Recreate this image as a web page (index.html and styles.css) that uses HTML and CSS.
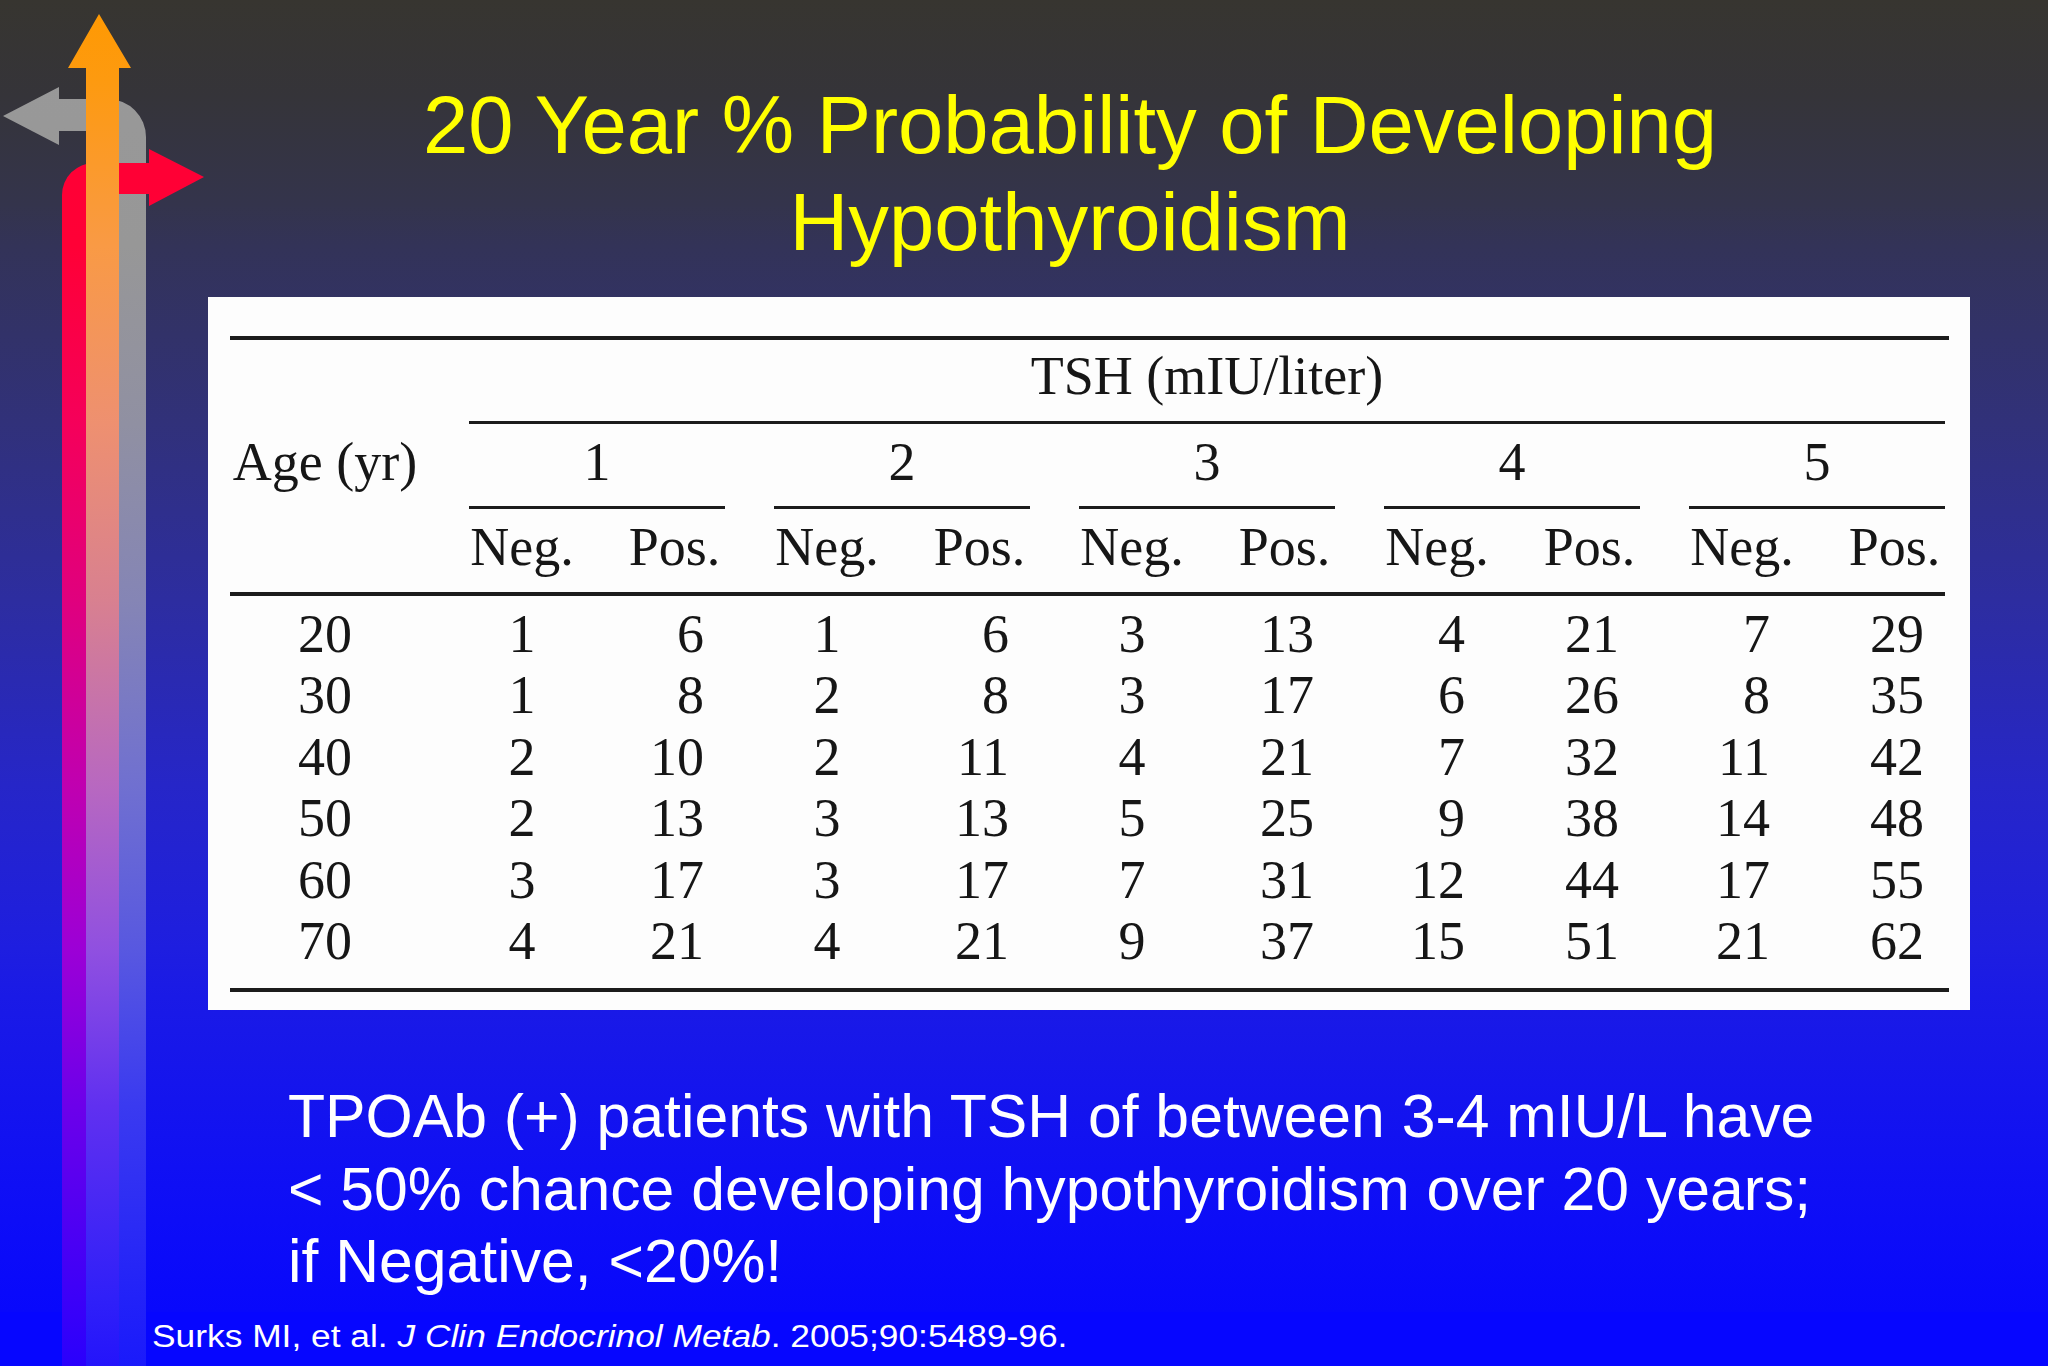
FILE: index.html
```html
<!DOCTYPE html>
<html lang="en">
<head>
<meta charset="utf-8">
<title>20 Year % Probability of Developing Hypothyroidism</title>
<link rel="stylesheet" href="styles.css">
</head>
<body>
<div class="slide">
  <h1 class="title">20 Year % Probability of Developing<br>Hypothyroidism</h1>

  <div class="table-box">
    <div class="grid">
      <div class="age-head">Age (yr)</div>
      <div class="tsh">TSH (mIU/liter)</div>

      <div class="grp">1</div>
      <div class="grp">2</div>
      <div class="grp">3</div>
      <div class="grp">4</div>
      <div class="grp">5</div>

      <div class="sub">Neg.</div><div class="sub">Pos.</div>
      <div class="sub">Neg.</div><div class="sub">Pos.</div>
      <div class="sub">Neg.</div><div class="sub">Pos.</div>
      <div class="sub">Neg.</div><div class="sub">Pos.</div>
      <div class="sub">Neg.</div><div class="sub">Pos.</div>

      <div class="midrule"></div>

      <div class="age">20</div><div class="neg">1</div><div class="pos">6</div><div class="neg">1</div><div class="pos">6</div><div class="neg">3</div><div class="pos">13</div><div class="neg2">4</div><div class="pos">21</div><div class="neg2">7</div><div class="pos">29</div>
      <div class="age">30</div><div class="neg">1</div><div class="pos">8</div><div class="neg">2</div><div class="pos">8</div><div class="neg">3</div><div class="pos">17</div><div class="neg2">6</div><div class="pos">26</div><div class="neg2">8</div><div class="pos">35</div>
      <div class="age">40</div><div class="neg">2</div><div class="pos">10</div><div class="neg">2</div><div class="pos">11</div><div class="neg">4</div><div class="pos">21</div><div class="neg2">7</div><div class="pos">32</div><div class="neg2">11</div><div class="pos">42</div>
      <div class="age">50</div><div class="neg">2</div><div class="pos">13</div><div class="neg">3</div><div class="pos">13</div><div class="neg">5</div><div class="pos">25</div><div class="neg2">9</div><div class="pos">38</div><div class="neg2">14</div><div class="pos">48</div>
      <div class="age">60</div><div class="neg">3</div><div class="pos">17</div><div class="neg">3</div><div class="pos">17</div><div class="neg">7</div><div class="pos">31</div><div class="neg2">12</div><div class="pos">44</div><div class="neg2">17</div><div class="pos">55</div>
      <div class="age">70</div><div class="neg">4</div><div class="pos">21</div><div class="neg">4</div><div class="pos">21</div><div class="neg">9</div><div class="pos">37</div><div class="neg2">15</div><div class="pos">51</div><div class="neg2">21</div><div class="pos">62</div>
    </div>
  </div>

  <p class="note">TPOAb (+) patients with TSH of between 3-4 mIU/L have<br>&lt; 50% chance developing hypothyroidism over 20 years;<br>if Negative, &lt;20%!</p>

  <div class="footer"><span class="cite">Surks MI, et al. <i>J Clin Endocrinol Metab</i>. 2005;90:5489-96.</span></div>

  <svg class="arrows" width="220" height="1366" viewBox="0 0 220 1366" aria-hidden="true">
    <defs>
      <linearGradient id="gRed" gradientUnits="userSpaceOnUse" x1="0" y1="0" x2="0" y2="1366">
        <stop offset="0" stop-color="#ff0033"/>
        <stop offset="0.18" stop-color="#ff0036"/>
        <stop offset="0.31" stop-color="#f5005a"/>
        <stop offset="0.44" stop-color="#e0007e"/>
        <stop offset="0.575" stop-color="#c000b0"/>
        <stop offset="0.695" stop-color="#9c00d6"/>
        <stop offset="0.81" stop-color="#6c00ea"/>
        <stop offset="0.95" stop-color="#3c00f8"/>
        <stop offset="1" stop-color="#2a00fc"/>
      </linearGradient>
      <linearGradient id="gOrange" gradientUnits="userSpaceOnUse" x1="0" y1="0" x2="0" y2="1366">
        <stop offset="0" stop-color="#ff9900"/>
        <stop offset="0.06" stop-color="#fd9a10"/>
        <stop offset="0.18" stop-color="#f99a45"/>
        <stop offset="0.31" stop-color="#ee9070"/>
        <stop offset="0.44" stop-color="#d88090"/>
        <stop offset="0.575" stop-color="#b868c0"/>
        <stop offset="0.695" stop-color="#9050e0"/>
        <stop offset="0.81" stop-color="#6030f0"/>
        <stop offset="0.95" stop-color="#3020f8"/>
        <stop offset="1" stop-color="#2414fb"/>
      </linearGradient>
      <linearGradient id="gGray" gradientUnits="userSpaceOnUse" x1="0" y1="0" x2="0" y2="1366">
        <stop offset="0" stop-color="#999999"/>
        <stop offset="0.18" stop-color="#979797"/>
        <stop offset="0.31" stop-color="#9090a2"/>
        <stop offset="0.44" stop-color="#8585b5"/>
        <stop offset="0.575" stop-color="#7070d0"/>
        <stop offset="0.695" stop-color="#5858e0"/>
        <stop offset="0.81" stop-color="#3a3af0"/>
        <stop offset="0.95" stop-color="#2222f8"/>
        <stop offset="1" stop-color="#1a1afb"/>
      </linearGradient>
    </defs>
    <path fill="url(#gGray)" d="M3,116 L59,87 L59,99 L108,99 A38,38 0 0 1 146,137 L146,1366 L114,1366 L114,137 A6,6 0 0 0 108,131 L59,131 L59,145 Z"/>
    <path fill="url(#gRed)" d="M204,177 L149,149 L149,163 L94,163 A32,32 0 0 0 62,195 L62,1366 L93,1366 L93,200 A6,6 0 0 1 99,194 L149,194 L149,206 Z"/>
    <path fill="url(#gOrange)" d="M99,14 L131,68 L119,68 L119,1366 L86,1366 L86,68 L68,68 Z"/>
  </svg>
</div>
</body>
</html>
```

FILE: styles.css
```css
* {
  box-sizing: border-box;
}

html, body {
  margin: 0;
  padding: 0;
}

body {
  width: 2048px;
  height: 1366px;
  overflow: hidden;
  font-family: "Liberation Sans", Arial, sans-serif;
}

.slide {
  position: relative;
  width: 2048px;
  height: 1366px;
  display: flex;
  flex-direction: column;
  overflow: hidden;
  background: linear-gradient(to bottom,
    #373530 0%,
    #353439 7%,
    #34344c 15%,
    #333358 18%,
    #31317a 31%,
    #2d2da0 44%,
    #2626c8 57.5%,
    #1e1ee0 69.5%,
    #1a1ae6 73%,
    #0e0ef6 88%,
    #0808fc 96%,
    #0505ff 100%);
}

.title {
  margin: 76px 0 0 92px;
  font-family: "Liberation Sans", Arial, sans-serif;
  font-weight: normal;
  font-size: 81.4px;
  line-height: 97px;
  color: #ffff00;
  text-align: center;
  white-space: nowrap;
}

.table-box {
  margin: 27px 0 0 208px;
  width: 1762px;
  padding: 39px 21px 18px 22px;
  background: #fdfdfd;
}

.grid {
  display: grid;
  grid-template-columns: 190px repeat(5, 106px 101px);
  column-gap: 49px;
  border-top: 4px solid #1c1c1c;
  border-bottom: 4px solid #1c1c1c;
  padding-bottom: 15.6px;
  font-family: "Liberation Serif", "Times New Roman", serif;
  font-size: 54px;
  color: #161616;
}

.age-head {
  grid-column: 1;
  grid-row: 1 / span 3;
  align-self: start;
  padding-top: 92px;
  line-height: 60px;
  text-align: center;
  white-space: nowrap;
}

.tsh {
  grid-column: 2 / -1;
  grid-row: 1;
  padding: 6px 0 15px;
  line-height: 60px;
  text-align: center;
  border-bottom: 3px solid #1c1c1c;
}

.grp {
  grid-column: span 2;
  padding: 8px 0 14px;
  line-height: 60px;
  text-align: center;
  border-bottom: 3px solid #1c1c1c;
}

.sub {
  padding: 8px 0 15px;
  line-height: 60px;
  text-align: center;
  white-space: nowrap;
}

.midrule {
  grid-column: 1 / -1;
  height: 4px;
  background: #1c1c1c;
  margin-bottom: 8px;
}

.age,
.neg,
.neg2,
.pos {
  line-height: 61.4px;
  white-space: nowrap;
}

.age {
  grid-column: 1;
  text-align: center;
}

.neg {
  text-align: center;
}

.neg2 {
  text-align: right;
  padding-right: 25px;
}

.pos {
  text-align: right;
  padding-right: 21px;
}

.note {
  margin: 70px 0 0 288px;
  font-family: "Liberation Sans", Arial, sans-serif;
  font-size: 60.7px;
  line-height: 72.5px;
  color: #ffffff;
  white-space: nowrap;
}

.footer {
  margin-top: auto;
  height: 54px;
  padding-left: 152px;
  padding-top: 10px;
  background: #0606ff;
  color: #ffffff;
  font-size: 31px;
  line-height: 30px;
  white-space: nowrap;
}

.cite {
  display: inline-block;
  transform: scaleX(1.14);
  transform-origin: left center;
}

.arrows {
  position: absolute;
  left: 0;
  top: 0;
}
```
